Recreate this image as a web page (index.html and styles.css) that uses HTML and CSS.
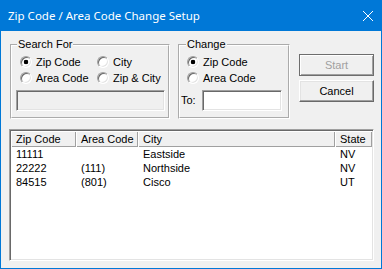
FILE: index.html
```html
<!DOCTYPE html>
<html>

<head>
    <title>Zip Code / Area Code Change Setup</title>
    <link rel="stylesheet" href="styles.css">
</head>

<body>
    <div class="window">
        <div class="titlebar">
            <span class="title">Zip Code / Area Code Change Setup</span>
            <svg class="close" width="10" height="10" viewBox="0 0 10 10">
                <path d="M0 0L10 10M10 0L0 10" stroke="#fff" stroke-width="1" />
            </svg>
        </div>

        <div class="client">
            <div class="top">
                <fieldset class="group search-group">
                    <legend>Search For</legend>
                    <div class="radio-grid">
                        <label class="opt"><input type="radio" name="search" checked>Zip Code</label>
                        <label class="opt"><input type="radio" name="search">City</label>
                        <label class="opt"><input type="radio" name="search">Area Code</label>
                        <label class="opt"><input type="radio" name="search">Zip &amp; City</label>
                    </div>
                    <input class="edit" type="text" disabled>
                </fieldset>

                <fieldset class="group change-group">
                    <legend>Change</legend>
                    <div class="radio-list">
                        <label class="opt"><input type="radio" name="change" checked>Zip Code</label>
                        <label class="opt"><input type="radio" name="change">Area Code</label>
                    </div>
                    <div class="to-row">
                        <label for="toValue">To:</label>
                        <input class="edit to-edit" type="text" id="toValue">
                    </div>
                </fieldset>

                <div class="buttons">
                    <button class="btn btn-default" disabled>Start</button>
                    <button class="btn">Cancel</button>
                </div>
            </div>

            <div class="list">
                <div class="list-row list-head">
                    <div class="col">Zip Code</div>
                    <div class="col">Area Code</div>
                    <div class="col">City</div>
                    <div class="col">State</div>
                </div>
                <div class="list-row">
                    <div class="col">11111</div>
                    <div class="col"></div>
                    <div class="col">Eastside</div>
                    <div class="col">NV</div>
                </div>
                <div class="list-row">
                    <div class="col">22222</div>
                    <div class="col">(111)</div>
                    <div class="col">Northside</div>
                    <div class="col">NV</div>
                </div>
                <div class="list-row">
                    <div class="col">84515</div>
                    <div class="col">(801)</div>
                    <div class="col">Cisco</div>
                    <div class="col">UT</div>
                </div>
            </div>
        </div>
    </div>
</body>

</html>
```

FILE: styles.css
```css
body {
    margin: 0;
    background-color: #fff;
    font-family: 'Liberation Sans', Arial, sans-serif;
    font-size: 11px;
    line-height: 13px;
    color: #000;
    overflow: hidden;
}

.window {
    width: 382px;
    height: 269px;
    box-sizing: border-box;
    border: 1px solid #0078d7;
    border-top: none;
    background-color: #f0f0f0;
}

.titlebar {
    height: 31px;
    background-color: #0078d7;
    display: flex;
    align-items: center;
    justify-content: space-between;
    padding: 0 9px 0 8px;
    margin: 0 -1px;
    box-sizing: border-box;
}

.title {
    color: #fff;
    font-family: 'Noto Sans', 'Open Sans', sans-serif;
    font-size: 11.5px;
    line-height: 16px;
}

.close {
    display: block;
}

.client {
    padding: 7px 7px 0 8px;
}

.top {
    display: flex;
    align-items: flex-start;
}

/* group boxes */
.group {
    margin: 0;
    border: 2px groove #fff;
    box-sizing: border-box;
    min-width: 0;
}

.group legend {
    padding: 0 1px;
    line-height: 13px;
}

.search-group {
    width: 160px;
    margin-left: 1px;
    padding: 3px 3px 6px 4px;
}

.search-group legend {
    margin-left: 1px;
}

.change-group {
    width: 112px;
    margin-left: 8px;
    padding: 3px 6px 6px 1px;
}

.change-group legend {
    margin-left: 5px;
}

.radio-grid {
    display: grid;
    grid-template-columns: 77px auto;
    grid-auto-rows: 16px;
    margin-left: 4px;
}

.radio-list {
    display: grid;
    grid-auto-rows: 16px;
    margin-left: 6px;
}

.opt {
    display: flex;
    align-items: center;
    gap: 4px;
    white-space: nowrap;
}

.opt input {
    appearance: none;
    width: 12px;
    height: 12px;
    margin: 0;
    box-sizing: border-box;
    border-radius: 50%;
    border: 1px solid;
    border-color: #a0a0a0 #fff #fff #a0a0a0;
    box-shadow: inset 1px 1px #696969, inset -1px -1px #e3e3e3;
    background: #fff;
}

.opt input:checked {
    background: radial-gradient(circle, #000 0 2px, #fff 2.6px);
}

/* edit boxes */
.edit {
    display: block;
    box-sizing: border-box;
    height: 21px;
    margin: 4px 0 0;
    padding: 0 3px;
    border: 1px solid;
    border-color: #a0a0a0 #fff #fff #a0a0a0;
    box-shadow: inset 1px 1px #696969, inset -1px -1px #e3e3e3;
    background-color: #fff;
    font: inherit;
}

.edit:disabled {
    width: 149px;
    background-color: #f0f0f0;
}

.to-row {
    display: flex;
    justify-content: space-between;
    align-items: flex-start;
}

.to-row label {
    margin-top: 8px;
}

.to-edit {
    width: 80px;
}

/* push buttons */
.buttons {
    display: flex;
    flex-direction: column;
    gap: 4px;
    margin: 16px 0 0 9px;
}

.btn {
    width: 75px;
    height: 22px;
    margin: 0;
    padding: 0;
    box-sizing: border-box;
    background-color: #f0f0f0;
    font: inherit;
    color: #000;
    border: 1px solid;
    border-color: #fff #696969 #696969 #fff;
    box-shadow: inset -1px -1px #a0a0a0, inset 1px 1px #e3e3e3;
}

.btn-default {
    border-color: #6d6d6d;
    box-shadow: inset 1px 1px #fff, inset -1px -1px #a0a0a0;
}

.btn:disabled {
    color: #a0a0a0;
}

/* list view */
.list {
    margin-top: 10px;
    width: 365px;
    height: 132px;
    box-sizing: border-box;
    padding: 1px;
    border: 1px solid;
    border-color: #a0a0a0 #fff #fff #a0a0a0;
    box-shadow: inset 1px 1px #696969, inset -1px -1px #e3e3e3;
    background-color: #fff;
}

.list-row {
    display: grid;
    grid-template-columns: 65px 62px 197px 37px;
    height: 14px;
    line-height: 14px;
}

.list-row .col {
    padding-left: 5px;
    white-space: nowrap;
    overflow: hidden;
}

.list-head {
    height: 16px;
    line-height: 16px;
}

.list-head .col {
    background-color: #f0f0f0;
    box-shadow: inset 1px 1px #fff, inset -1px -1px #a0a0a0;
}
```
